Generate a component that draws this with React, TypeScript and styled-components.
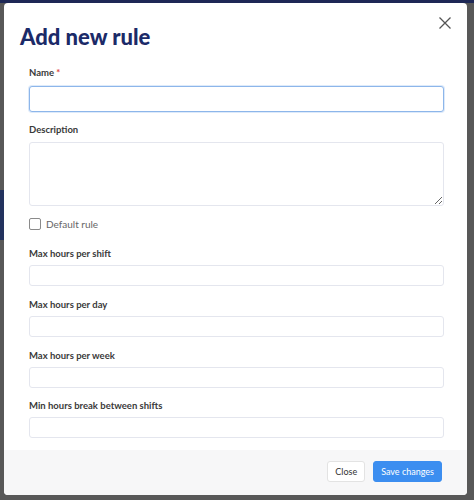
import React from "react";
import styled, { createGlobalStyle } from "styled-components";

const Global = createGlobalStyle`
  html, body { margin: 0; padding: 0; }
  body { font-family: Lato, "Open Sans", "Liberation Sans", sans-serif; }
  * { box-sizing: border-box; }
`;

const Backdrop = styled.div`
  width: 474px;
  height: 500px;
  padding: 3px 7px 5px 4px;
  background:
    linear-gradient(to bottom, #1e2856 0, #1e2856 3px, transparent 3px),
    linear-gradient(to bottom, transparent 190px, #23325e 190px, #23325e 240px, transparent 240px) left / 4px 100% no-repeat,
    #585858;
`;

const Modal = styled.div`
  width: 463px;
  height: 492px;
  background: #fff;
  border-radius: 4px;
  display: flex;
  flex-direction: column;
  overflow: hidden;
`;

const Header = styled.div`
  display: flex;
  align-items: flex-start;
  justify-content: space-between;
  padding: 19px 15px 0 16px;
  height: 49px;
`;

const Title = styled.h1`
  margin: 0;
  font-size: 22px;
  line-height: 30px;
  font-weight: 900;
  color: #1b2a68;
`;

const CloseX = styled.button`
  border: 0;
  background: none;
  padding: 0;
  margin-top: -6px;
  width: 14px;
  height: 14px;
  display: flex;
  cursor: pointer;
`;

const Body = styled.div`
  padding: 14px 23px 0 25px;
  display: flex;
  flex-direction: column;
`;

const Field = styled.div<{ $mt: number }>`
  display: flex;
  flex-direction: column;
  margin-top: ${(p) => p.$mt}px;
`;

const Label = styled.label<{ $gap: number }>`
  font-size: 9.5px;
  line-height: 14px;
  font-weight: 700;
  color: #3a3a3a;
  margin-bottom: ${(p) => p.$gap}px;
`;

const Req = styled.span`
  color: #e0433a;
`;

const Input = styled.input<{ $h: number; $focus?: boolean }>`
  height: ${(p) => p.$h}px;
  width: 100%;
  border: 1px solid ${(p) => (p.$focus ? "#8db6ea" : "#e4e6ee")};
  border-radius: 3px;
  box-shadow: ${(p) => (p.$focus ? "0 0 0 1px rgba(120,170,235,0.25)" : "none")};
  outline: none;
  font-family: inherit;
  font-size: 11px;
  padding: 0 8px;
`;

const TextArea = styled.textarea`
  height: 64px;
  width: 100%;
  border: 1px solid #e4e6ee;
  border-radius: 3px;
  outline: none;
  font-family: inherit;
  font-size: 11px;
  padding: 6px 8px;
  resize: vertical;
`;

const CheckRow = styled.label`
  display: flex;
  align-items: center;
  gap: 5px;
  margin-top: 11px;
  height: 14px;
  font-size: 10px;
  color: #666;
`;

const Box = styled.span`
  width: 12px;
  height: 12px;
  border: 1px solid #8a8a8a;
  border-radius: 2px;
  background: #fff;
  display: inline-block;
`;

const Footer = styled.div`
  margin-top: auto;
  height: 45px;
  background: #f7f7f8;
  display: flex;
  justify-content: flex-end;
  align-items: flex-start;
  gap: 8px;
  padding: 11px 25px 0 0;
`;

const Button = styled.button<{ $primary?: boolean }>`
  height: 21px;
  padding: 0 7px;
  border-radius: 3px;
  font-family: inherit;
  font-size: 9px;
  border: 1px solid ${(p) => (p.$primary ? "#3c8ef0" : "#e3e3e3")};
  background: ${(p) => (p.$primary ? "#3c8ef0" : "#fff")};
  color: ${(p) => (p.$primary ? "#fff" : "#333")};
  cursor: pointer;
`;

const fields = [
  { label: "Max hours per shift", mt: 16 },
  { label: "Max hours per day", mt: 12 },
  { label: "Max hours per week", mt: 12 },
  { label: "Min hours break between shifts", mt: 11 },
];

export default function App() {
  return (
    <>
      <Global />
      <Backdrop>
        <Modal>
          <Header>
            <Title>Add new rule</Title>
            <CloseX aria-label="Close">
              <svg width="14" height="14" viewBox="0 0 14 14">
                <path d="M1.5 1.5 L12.5 12.5 M12.5 1.5 L1.5 12.5" stroke="#555" strokeWidth="1.3" fill="none" />
              </svg>
            </CloseX>
          </Header>
          <Body>
            <Field $mt={0}>
              <Label $gap={6}>
                Name <Req>*</Req>
              </Label>
              <Input $h={26} $focus />
            </Field>
            <Field $mt={11}>
              <Label $gap={5}>Description</Label>
              <TextArea />
            </Field>
            <CheckRow>
              <Box />
              Default rule
            </CheckRow>
            {fields.map((f) => (
              <Field key={f.label} $mt={f.mt}>
                <Label $gap={4}>{f.label}</Label>
                <Input $h={21} />
              </Field>
            ))}
          </Body>
          <Footer>
            <Button>Close</Button>
            <Button $primary>Save changes</Button>
          </Footer>
        </Modal>
      </Backdrop>
    </>
  );
}
